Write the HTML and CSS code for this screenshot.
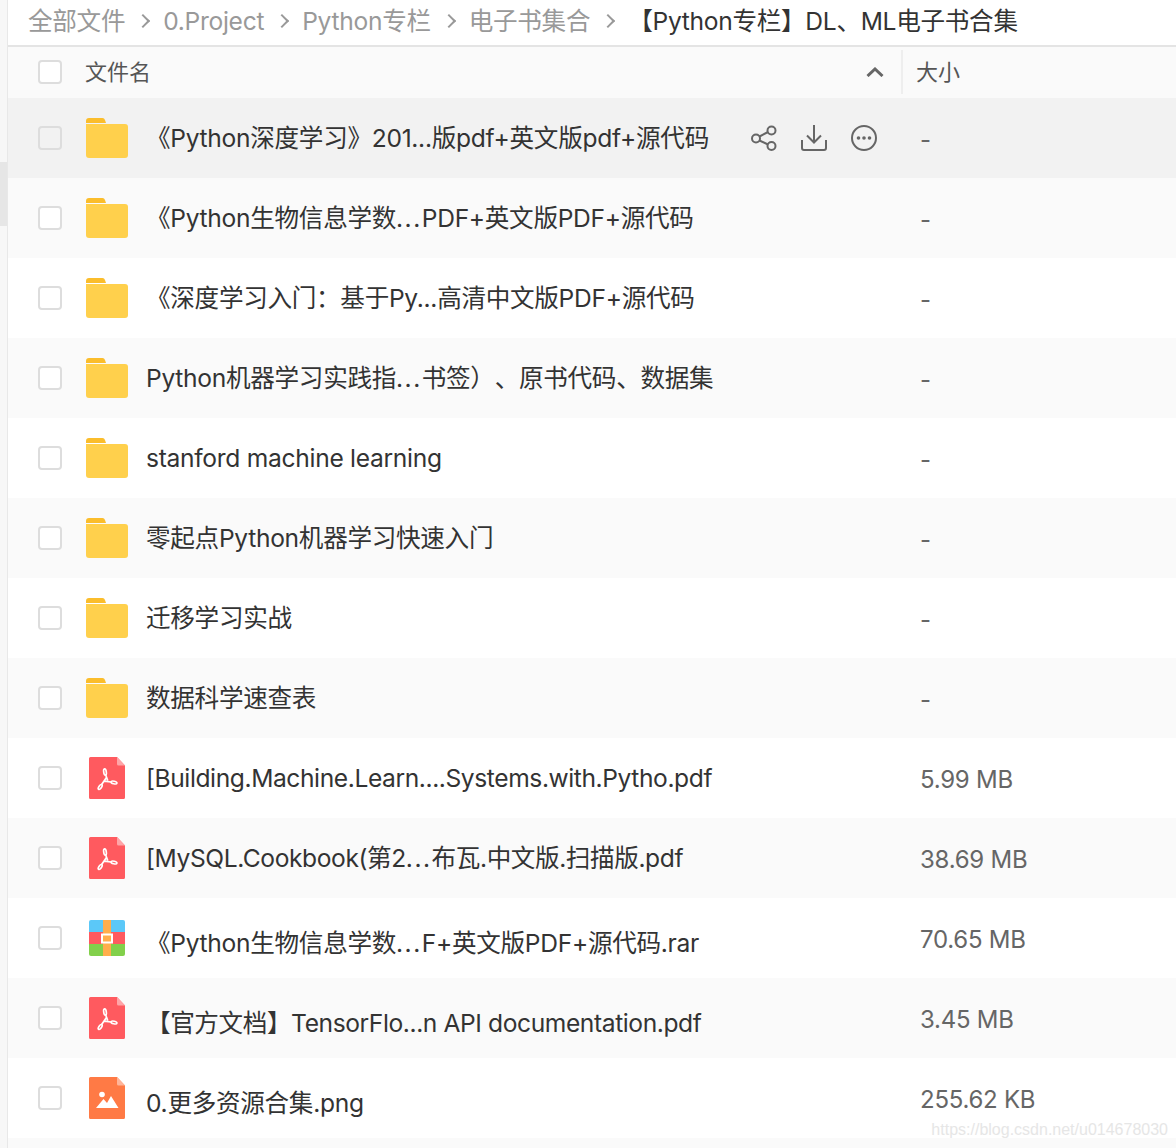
FILE: index.html
```html
<!DOCTYPE html>
<html lang="zh">
<head>
<meta charset="utf-8">
<title>文件列表</title>
<link rel="stylesheet" href="styles.css">
</head>
<body>
<svg class="defs" width="0" height="0" aria-hidden="true">
  <symbol id="folder" viewBox="0 0 42 40">
    <path d="M0 3a3 3 0 0 1 3-3h13a3 3 0 0 1 3 2l1 3H0z" fill="#fbbd2b"/>
    <path d="M0 6h39a3 3 0 0 1 3 3v28a3 3 0 0 1-3 3H3a3 3 0 0 1-3-3z" fill="#ffd04c"/>
  </symbol>
  <symbol id="pdf" viewBox="0 0 36 42">
    <path d="M1.500 0H28l8 8.500V40.500a1.500 1.500 0 0 1-1.500 1.500h-33A1.500 1.500 0 0 1 0 40.500V1.500A1.500 1.500 0 0 1 1.500 0z" fill="#ff5a5f"/>
    <path d="M28 0l8 8.500h-6.500a1.500 1.500 0 0 1-1.500-1.500z" fill="#ffa5a8"/>
    <g fill="none" stroke="#fff" stroke-width="1.700">
      <ellipse cx="16" cy="15" rx="1.300" ry="3.200" transform="rotate(-8 16 15)"/>
      <ellipse cx="11.200" cy="30" rx="1.300" ry="2.800" transform="rotate(35 11.200 30)"/>
      <ellipse cx="25" cy="25.500" rx="3" ry="1.300" transform="rotate(12 25 25.500)"/>
      <path d="M16.800 18.200l2 5.500M12.500 27.800l4.800-7M22 25l-7-.8"/>
    </g>
  </symbol>
  <symbol id="rar" viewBox="0 0 36 36">
    <path d="M2 0h32a2 2 0 0 1 2 2v10H0V2a2 2 0 0 1 2-2z" fill="#5bc8f8"/>
    <rect y="12" width="36" height="12" fill="#ff5a5f"/>
    <path d="M0 24h36v10a2 2 0 0 1-2 2H2a2 2 0 0 1-2-2z" fill="#82d04b"/>
    <rect x="14" width="8" height="36" fill="#ffae4c"/>
    <rect x="13" y="14.500" width="10" height="8" fill="#ffae4c" stroke="#fff" stroke-width="2"/>
  </symbol>
  <symbol id="image" viewBox="0 0 36 42">
    <path d="M1.500 0H28l8 8.500V40.500a1.500 1.500 0 0 1-1.500 1.500h-33A1.500 1.500 0 0 1 0 40.500V1.500A1.500 1.500 0 0 1 1.500 0z" fill="#ff7a45"/>
    <path d="M28 0l8 8.500h-6.500a1.500 1.500 0 0 1-1.500-1.500z" fill="#ffb59a"/>
    <circle cx="13" cy="17.500" r="2.800" fill="#fff"/>
    <path d="M7 31l7.500-9 3.500 4 4-7 7.500 12z" fill="#fff"/>
  </symbol>
</svg>

<div class="page">
  <aside class="rail"><div class="rail-mark"></div></aside>
  <main class="content">
    <nav class="crumbs">
      <span>全部文件</span><i class="crumb-sep"></i>
      <span>0.Project</span><i class="crumb-sep"></i>
      <span>Python专栏</span><i class="crumb-sep"></i>
      <span>电子书集合</span><i class="crumb-sep"></i>
      <span class="crumb-current">【Python专栏】DL、ML电子书合集</span>
    </nav>

    <div class="table-head">
      <span class="check"></span>
      <span class="head-name">文件名</span>
      <svg class="sort" viewBox="0 0 18 10"><path d="M1.500 9l7.500-7 7.500 7" fill="none" stroke="#666" stroke-width="3"/></svg>
      <span class="head-size">大小</span>
    </div>

    <div class="row hover">
      <span class="check"></span>
      <svg class="ico-folder"><use href="#folder"/></svg>
      <span class="name">《Python深度学习》201...版pdf+英文版pdf+源代码</span>
      <span class="actions">
        <svg class="act" viewBox="0 0 26 26"><g fill="none" stroke="#666" stroke-width="2"><circle cx="20.500" cy="5.500" r="4"/><circle cx="5" cy="13.500" r="4"/><circle cx="20.500" cy="21" r="4"/><path d="M8.500 11.500l8.500-4.500M8.500 15.500l8.500 4"/></g></svg>
        <svg class="act" viewBox="0 0 26 26"><g fill="none" stroke="#666" stroke-width="2"><path d="M13 0v17M6 10.500l7 7 7-7"/><path d="M1 15v8a2 2 0 0 0 2 2h20a2 2 0 0 0 2-2v-8"/></g></svg>
        <svg class="act" viewBox="0 0 26 26"><circle cx="13" cy="13" r="12" fill="none" stroke="#666" stroke-width="2"/><circle cx="7.500" cy="13" r="1.800" fill="#666"/><circle cx="13" cy="13" r="1.800" fill="#666"/><circle cx="18.500" cy="13" r="1.800" fill="#666"/></svg>
      </span>
      <span class="size">-</span>
    </div>
    <div class="row alt"><span class="check"></span><svg class="ico-folder"><use href="#folder"/></svg><span class="name">《Python生物信息学数<span class="dots">...</span>PDF+英文版PDF+源代码</span><span class="size">-</span></div>
    <div class="row"><span class="check"></span><svg class="ico-folder"><use href="#folder"/></svg><span class="name">《深度学习入门：基于Py...高清中文版PDF+源代码</span><span class="size">-</span></div>
    <div class="row alt"><span class="check"></span><svg class="ico-folder"><use href="#folder"/></svg><span class="name">Python机器学习实践指<span class="dots">...</span>书签）、原书代码、数据集</span><span class="size">-</span></div>
    <div class="row"><span class="check"></span><svg class="ico-folder"><use href="#folder"/></svg><span class="name">stanford machine learning</span><span class="size">-</span></div>
    <div class="row alt"><span class="check"></span><svg class="ico-folder"><use href="#folder"/></svg><span class="name">零起点Python机器学习快速入门</span><span class="size">-</span></div>
    <div class="row"><span class="check"></span><svg class="ico-folder"><use href="#folder"/></svg><span class="name">迁移学习实战</span><span class="size">-</span></div>
    <div class="row alt"><span class="check"></span><svg class="ico-folder"><use href="#folder"/></svg><span class="name">数据科学速查表</span><span class="size">-</span></div>
    <div class="row"><span class="check"></span><span class="ico-wrap"><svg class="ico-file"><use href="#pdf"/></svg></span><span class="name tight">[Building.Machine.Learn....Systems.with.Pytho.pdf</span><span class="size">5.99 MB</span></div>
    <div class="row alt"><span class="check"></span><span class="ico-wrap"><svg class="ico-file"><use href="#pdf"/></svg></span><span class="name tight">[MySQL.Cookbook(第2<span class="dots">...</span>布瓦.中文版.扫描版.pdf</span><span class="size">38.69 MB</span></div>
    <div class="row"><span class="check"></span><span class="ico-wrap"><svg class="ico-rar"><use href="#rar"/></svg></span><span class="name low">《Python生物信息学数<span class="dots">...</span>F+英文版PDF+源代码.rar</span><span class="size">70.65 MB</span></div>
    <div class="row alt"><span class="check"></span><span class="ico-wrap"><svg class="ico-file"><use href="#pdf"/></svg></span><span class="name low tight">【官方文档】TensorFlo...n API documentation.pdf</span><span class="size">3.45 MB</span></div>
    <div class="row"><span class="check"></span><span class="ico-wrap"><svg class="ico-file"><use href="#image"/></svg></span><span class="name low">0.更多资源合集.png</span><span class="size">255.62 KB</span></div>
    <div class="row alt tail"></div>
  </main>
</div>
<div class="watermark">https://blog.csdn.net/u014678030</div>
</body>
</html>
```
FILE: styles.css
```css
* { box-sizing: border-box; }
html, body { margin: 0; height: 1148px; overflow: hidden; background: #fff; }
body {
  position: relative;
  font-family: Inter, "Noto Sans CJK SC", sans-serif;
  font-size: 24.6px;
  letter-spacing: -0.3px;
  line-height: 34px;
  text-spacing-trim: space-all;
  color: #333;
}
.defs { position: absolute; }
.page { display: flex; height: 1148px; }
.rail { width: 8px; flex: none; background: #f7f7f7; border-right: 1px solid #e8e8e8; padding-top: 162px; }
.rail-mark { height: 64px; background: #e6e6e6; }
.content { flex: 1; min-width: 0; }

.crumbs {
  height: 47px;
  display: flex;
  align-items: center;
  padding: 0 0 3px 20px;
  border-bottom: 2px solid #e4e4e4;
  color: #999;
  white-space: nowrap;
}
.crumb-sep {
  width: 10px; height: 10px;
  margin: 0 15px 0 13px;
  border-top: 2.500px solid #999;
  border-right: 2.500px solid #999;
  transform: rotate(45deg);
}
.crumb-current { color: #333; }

.table-head {
  height: 51px;
  display: flex;
  align-items: center;
  padding: 0 0 2px 30px;
  background: #fafafa;
  color: #555;
  font-size: 22px;
  letter-spacing: 0;
}
.head-name { margin-left: 23px; flex: 1; }
.sort { width: 18px; height: 10px; margin-right: 17px; }
.head-size {
  width: 275px;
  height: 44px;
  line-height: 44px;
  padding-left: 13px;
  border-left: 2px solid #eee;
}

.check {
  flex: none;
  width: 24px; height: 24px;
  border: 2px solid #ddd;
  border-radius: 4px;
  background: #fff;
}
.row {
  height: 80px;
  display: flex;
  align-items: center;
  padding-left: 30px;
}
.row.alt { background: #fafafa; }
.row.hover { background: #f2f2f2; }
.row.hover .check { background: transparent; }
.row.tail { height: 10px; }

.ico-folder { width: 42px; height: 40px; margin-left: 24px; flex: none; }
.ico-wrap { width: 42px; margin-left: 24px; flex: none; display: flex; justify-content: center; }
.ico-file { width: 36px; height: 42px; display: block; }
.ico-rar { width: 36px; height: 36px; display: block; }
.name { margin-left: 18px; flex: 1; min-width: 0; white-space: nowrap; }
.name.low { padding-top: 10px; }
.name.tight { letter-spacing: -0.41px; }
.dots { letter-spacing: 1.500px; }
.actions { display: flex; gap: 24px; margin-right: 25px; }
.act { width: 26px; height: 26px; display: block; }
.size { width: 274px; flex: none; padding: 4px 0 0 18px; color: #666; font-size: 24px; letter-spacing: -0.25px; }

.watermark {
  position: absolute;
  right: 8px;
  bottom: 8px;
  font-family: "Liberation Sans", sans-serif;
  font-size: 16px;
  letter-spacing: 0;
  line-height: 20px;
  color: #e6e6e6;
}
```
